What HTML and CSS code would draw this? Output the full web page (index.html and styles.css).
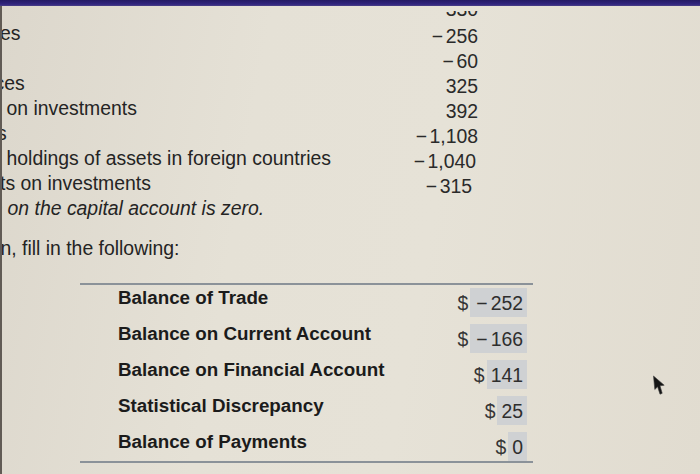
FILE: index.html
```html
<!DOCTYPE html>
<html lang="en">
<head>
<meta charset="utf-8">
<title>Balance of Payments</title>
<link rel="stylesheet" href="styles.css">
</head>
<body>
<div class="screen">
  <div class="topbar"></div>
  <div class="page">
    <div class="viewport">
      <div class="ledger">
        <div class="labels">
          <div class="line ind-a">es</div>
          <div class="line"></div>
          <div class="line ind-c">ces</div>
          <div class="line ind-d">on investments</div>
          <div class="line ind-e">s</div>
          <div class="line ind-d">holdings of assets in foreign countries</div>
          <div class="line ind-g">ts on investments</div>
          <div class="line note ind-h">e on the capital account is zero.</div>
        </div>
        <div class="nums">
          <div class="line cut">330</div>
          <div class="line"><span class="neg">−</span>256</div>
          <div class="line"><span class="neg">−</span>60</div>
          <div class="line">325</div>
          <div class="line">392</div>
          <div class="line"><span class="neg">−</span>1,108</div>
          <div class="line shift-s"><span class="neg">−</span>1,040</div>
          <div class="line shift-l"><span class="neg">−</span>315</div>
        </div>
      </div>
      <p class="prompt">n, fill in the following:</p>
      <div class="results">
        <div class="result">
          <span class="rlabel">Balance of Trade</span>
          <span class="rvalue"><span class="cur">$</span><span class="box"><span class="neg">−</span>252</span></span>
        </div>
        <div class="result">
          <span class="rlabel">Balance on Current Account</span>
          <span class="rvalue"><span class="cur">$</span><span class="box"><span class="neg">−</span>166</span></span>
        </div>
        <div class="result">
          <span class="rlabel">Balance on Financial Account</span>
          <span class="rvalue"><span class="cur">$</span><span class="box">141</span></span>
        </div>
        <div class="result">
          <span class="rlabel">Statistical Discrepancy</span>
          <span class="rvalue"><span class="cur">$</span><span class="box">25</span></span>
        </div>
        <div class="result">
          <span class="rlabel">Balance of Payments</span>
          <span class="rvalue"><span class="cur">$</span><span class="box">0</span></span>
        </div>
      </div>
    </div>
  </div>
  <svg class="cursor" width="18" height="26" viewBox="0 0 18 26" aria-hidden="true">
    <path d="M3.5 3 L4.8 16.5 L7.6 13.8 L10 21.2 L12.2 20.3 L10 12.8 L14.2 12.2 Z" fill="#151515" stroke="#3a3a3a" stroke-width="0.6" stroke-linejoin="round"/>
  </svg>
</div>
</body>
</html>
```

FILE: styles.css
```css
* {
  box-sizing: border-box;
}

html, body {
  margin: 0;
  padding: 0;
  width: 700px;
  height: 474px;
  overflow: hidden;
}

body {
  font-family: "Liberation Sans", Arial, sans-serif;
  color: #242424;
  background: #e2ded3;
}

.screen {
  position: relative;
  width: 700px;
  height: 474px;
  display: flex;
  flex-direction: column;
  background: linear-gradient(100deg, #dcd7cc 0%, #e5e1d6 35%, #e6e2d7 60%, #e1dcd0 100%);
}

.topbar {
  height: 6px;
  flex: 0 0 6px;
  background: linear-gradient(180deg, #241a63 0%, #31257f 70%, #4a3f86 100%);
}

.page {
  flex: 1;
  padding-top: 5px;
  border-left: 2px solid #615b55;
  display: flex;
  flex-direction: column;
}

.viewport {
  flex: 1;
  overflow: hidden;
}

.ledger {
  display: flex;
  width: 476px;
}

.labels {
  flex: 1;
  padding-top: 10.4px;
}

.line {
  height: 24.9px;
  line-height: 24.9px;
  font-size: 19.4px;
  white-space: nowrap;
}

.ind-a { text-indent: -2px; }
.ind-c { text-indent: -7.5px; }
.ind-d { text-indent: 4.5px; }
.ind-e { text-indent: -5px; }
.ind-g { text-indent: -2px; }
.ind-h { text-indent: -10.6px; }

.note {
  font-style: italic;
}

.nums {
  text-align: right;
  color: #2a2a2a;
}

.nums .cut {
  margin-top: -13.6px;
  margin-bottom: 2.1px;
}

.shift-s { padding-right: 2px; }
.shift-l { padding-right: 6px; }

.neg {
  margin-right: 2.5px;
}

.prompt {
  margin: 15.8px 0 0 0;
  height: 24.9px;
  line-height: 24.9px;
  font-size: 19.4px;
  text-indent: -1.5px;
  white-space: nowrap;
}

.results {
  margin: 22px 0 0 78px;
  width: 453px;
  border-top: 2px solid #8b9299;
  border-bottom: 2px solid #8b9299;
  padding-top: 3px;
  display: flex;
  flex-direction: column;
  gap: 7px;
}

.result {
  height: 29px;
  display: flex;
  justify-content: space-between;
  align-items: flex-start;
  padding: 0 6px 0 38px;
}

.rlabel {
  font-weight: bold;
  font-size: 18.8px;
  line-height: 20px;
  color: #1b1b1b;
}

.rvalue {
  display: flex;
  align-items: baseline;
  gap: 2px;
  font-size: 19.4px;
}

.cur {
  color: #353535;
  line-height: 27px;
  padding-top: 2px;
}

.box {
  display: block;
  height: 29px;
  line-height: 27px;
  padding: 2px 4px 0 4px;
  background: #cfd1d3;
  color: #2e2e2e;
  white-space: nowrap;
}

.box .neg {
  margin-left: 2px;
  margin-right: 3px;
}

.cursor {
  position: absolute;
  left: 650px;
  top: 373px;
}
```
